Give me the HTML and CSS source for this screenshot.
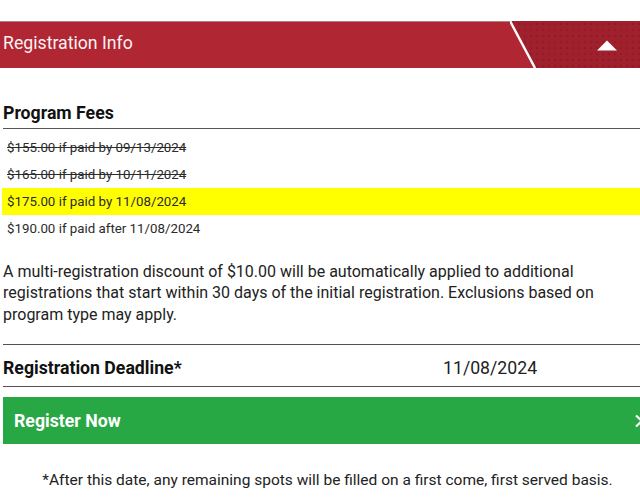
FILE: index.html
```html
<!DOCTYPE html>
<html>
<head>
<meta charset="utf-8">
<link rel="stylesheet" href="styles.css">
</head>
<body>
<div class="page">
  <div class="header">
    <div class="header-title">Registration Info</div>
    <div class="header-toggle">
      <svg width="130" height="47" viewBox="0 0 130 47">
        <defs>
          <pattern id="dots" width="6" height="6" patternUnits="userSpaceOnUse">
            <circle cx="3" cy="3" r="1.5" fill="#921d29"/>
          </pattern>
        </defs>
        <polygon points="1,0 130,0 130,47 26,47" fill="#a0212d"/>
        <polygon points="1,0 130,0 130,47 26,47" fill="url(#dots)"/>
        <line x1="0" y1="0" x2="25" y2="47" stroke="#ffffff" stroke-width="2.4"/>
        <polygon points="87,29.5 107,29.5 97,19.5" fill="#ffffff"/>
      </svg>
    </div>
  </div>
  <div class="content">
    <h2 class="section-title">Program Fees</h2>
    <ul class="fees">
      <li class="fee expired">$155.00 if paid by 09/13/2024</li>
      <li class="fee expired">$165.00 if paid by 10/11/2024</li>
      <li class="fee current">$175.00 if paid by 11/08/2024</li>
      <li class="fee">$190.00 if paid after 11/08/2024</li>
    </ul>
    <p class="note">A multi-registration discount of $10.00 will be automatically applied to additional registrations that start within 30 days of the initial registration. Exclusions based on program type may apply.</p>
    <div class="deadline">
      <div class="deadline-label">Registration Deadline*</div>
      <div class="deadline-date">11/08/2024</div>
    </div>
    <a class="register" href="#">
      <span>Register Now</span>
      <svg class="chev" width="10" height="14" viewBox="0 0 10 14"><polyline points="2,1.5 8,7 2,12.5" fill="none" stroke="#ffffff" stroke-width="2.2"/></svg>
    </a>
    <p class="footnote">*After this date, any remaining spots will be filled on a first come, first served basis.</p>
  </div>
</div>
</body>
</html>
```
FILE: styles.css
```css
html, body {
  margin: 0;
  padding: 0;
  background: #ffffff;
  overflow: hidden;
}
body {
  font-family: Roboto, "Liberation Sans", Arial, sans-serif;
  color: #222222;
}
.page {
  width: 652px;
  padding-top: 21px;
}
.header {
  display: flex;
  align-items: center;
  height: 47px;
  width: 640px;
  background: #b02633;
  border-top: 1px solid #a8838a;
  box-sizing: border-box;
}
.header-title {
  flex: 1;
  padding-left: 3px;
  font-size: 17.7px;
  color: #fdf1f2;
  padding-bottom: 4px;
}
.header-toggle {
  width: 130px;
  height: 47px;
  margin-top: -1px;
}
.header-toggle svg {
  display: block;
}
.content {
  padding-left: 3px;
}
.section-title {
  margin: 0;
  padding-top: 34px;
  font-size: 17.7px;
  font-weight: 700;
  color: #111111;
  line-height: 22px;
  padding-bottom: 4px;
  border-bottom: 1px solid #555555;
}
.fees {
  list-style: none;
  margin: 4.5px 0 0;
  padding: 0;
}
.fee {
  height: 27.3px;
  line-height: 27.3px;
  font-size: 13.3px;
  padding-left: 5px;
  color: #2b2b2b;
  margin-left: -1px;
}
.fee.expired {
  text-decoration: line-through;
}
.fee.current {
  background: #ffff00;
}
.note {
  margin: 18px 0 0;
  font-size: 16px;
  line-height: 21.5px;
  color: #222222;
}
.deadline {
  margin-top: 19px;
  display: grid;
  grid-template-columns: 440px 1fr;
  align-items: center;
  height: 41px;
  box-sizing: border-box;
  height: 43px;
  padding-top: 5px;
  border-top: 1px solid #5a4e52;
  border-bottom: 1px solid #5a4e52;
}
.deadline-label {
  font-size: 17.7px;
  font-weight: 700;
  color: #111111;
}
.deadline-date {
  font-size: 17.7px;
  color: #222222;
}
.register {
  margin-top: 10px;
  display: flex;
  align-items: center;
  justify-content: space-between;
  height: 47px;
  background: #28a745;
  color: #ffffff;
  text-decoration: none;
  font-size: 17.7px;
  font-weight: 700;
  padding: 0 8px 0 11px;
}
.chev {
  display: block;
}
.footnote {
  margin: 27px 0 0;
  text-align: center;
  font-size: 15.5px;
  line-height: 18px;
  color: #222222;
}
```
